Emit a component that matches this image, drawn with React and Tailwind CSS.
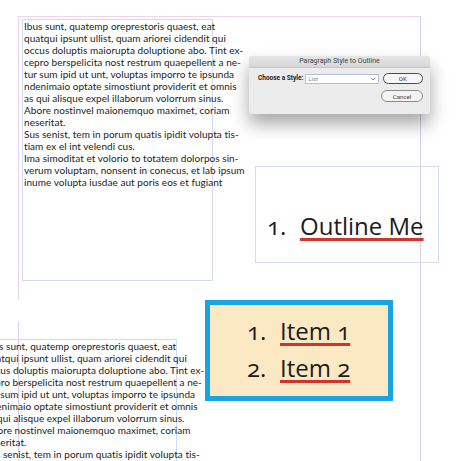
import React from "react";

const bodyLines = [
  "Ibus sunt, quatemp oreprestoris quaest, eat",
  "quatqui ipsunt ullist, quam ariorei cidendit qui",
  "occus doluptis maiorupta doluptione abo. Tint ex-",
  "cepro berspelicita nost restrum quaepellent a ne-",
  "tur sum ipid ut unt, voluptas imporro te ipsunda",
  "ndenimaio optate simostiunt providerit et omnis",
  "as qui alisque expel illaborum volorrum sinus.",
  "Abore nostinvel maionemquo maximet, coriam",
  "neseritat.",
  "Sus senist, tem in porum quatis ipidit volupta tis-",
  "tiam ex el int velendi cus.",
  "Ima simoditat et volorio to totatem dolorpos sin-",
  "verum voluptam, nonsent in conecus, et lab ipsum",
  "inume volupta iusdae aut poris eos et fugiant",
];

// threaded text frame, one line per row
const TextFrame = ({ className }) => (
  <div className={`absolute border border-[#d3dbf0] ${className}`}>
    <div className="pl-px text-[10px] leading-[12px] text-[#222] font-['Lato',sans-serif] tracking-[0.05px]">
      {bodyLines.map((line, i) => (
        <div key={i} className="whitespace-nowrap">
          {line}
        </div>
      ))}
    </div>
  </div>
);

const ListItem = ({ num, children }) => (
  <div className="flex items-baseline">
    <span className="w-[33px] oldstyle-nums">{num}</span>
    <span className="underline decoration-[#d0342c] decoration-[3px] underline-offset-[3px] oldstyle-nums">
      {children}
    </span>
  </div>
);

const StyleDialog = () => (
  <div className="absolute left-[249px] top-[56px] w-[181px] h-[58px] bg-[#ececec] rounded-[3px] shadow-[0_10px_18px_rgba(0,0,0,0.35)] overflow-hidden font-['Roboto',sans-serif]">
    <div className="h-[12px] bg-gradient-to-b from-[#e6e6e6] to-[#d7d7d7] border-b border-[#c6c6c6] text-center text-[7px] leading-[11px] text-[#444]">
      Paragraph Style to Outline
    </div>
    <div className="pl-[9px] pr-[7px] pt-[5px]">
      <div className="flex items-center">
        <span className="text-[6.5px] font-bold text-[#222] whitespace-nowrap">
          Choose a Style:
        </span>
        <div className="ml-[2px] w-[76px] h-[10px] bg-white border border-[#b3bfdc] flex items-center justify-between px-[2px]">
          <span className="text-[6px] text-[#888]">List</span>
          <svg width="6" height="4" viewBox="0 0 6 4">
            <path d="M0.8 0.8 L3 3 L5.2 0.8" fill="none" stroke="#777" strokeWidth="0.8" />
          </svg>
        </div>
        <div className="ml-[4px] w-[42px] h-[11px] rounded-full border border-[#4a4a4a] bg-[#f7f7f7] flex items-center justify-center text-[6px] text-[#333]">
          OK
        </div>
      </div>
      <div className="flex justify-end mt-[6px]">
        <div className="w-[42px] h-[12px] rounded-full border border-[#8c8c8c] bg-[#f4f4f4] flex items-center justify-center text-[6px] text-[#444]">
          Cancel
        </div>
      </div>
    </div>
  </div>
);

export default function App() {
  return (
    <div className="relative w-[474px] h-[461px] bg-white overflow-hidden">
      {/* margin and column guides */}
      <div className="absolute left-[18px] top-[16px] w-[402px] h-px bg-[#f2d4ee]" />
      <div className="absolute left-[18px] top-[16px] w-px h-[284px] bg-[#ecd2ec]" />
      <div className="absolute left-[18px] top-[322px] w-px h-[139px] bg-[#d6cdf0]" />
      <div className="absolute left-[420px] top-[16px] w-px h-[445px] bg-[#d4cdee]" />

      <TextFrame className="left-[22px] top-[19px] w-[191px] h-[262px]" />
      <TextFrame className="left-[-17px] top-[339px] w-[194px] h-[140px]" />

      {/* single outlined heading */}
      <div className="absolute left-[255px] top-[166px] w-[184px] h-[97px] border border-[#d3dbf0] pl-[11px] pt-[44px] font-['Open_Sans',sans-serif] text-[24px] leading-[30px] text-[#1c1c1c]">
        <ListItem num="1.">Outline Me</ListItem>
      </div>

      {/* list box */}
      <div className="absolute left-[205px] top-[300px] w-[188px] h-[101px] border-[5px] border-[#17a5e2] bg-[#fbe9c4] flex flex-col justify-center pl-[37px] pb-[3px] font-['Open_Sans',sans-serif] text-[24px] leading-[37px] text-[#1c1c1c]">
        <ListItem num="1.">Item 1</ListItem>
        <ListItem num="2.">Item 2</ListItem>
      </div>

      <StyleDialog />
    </div>
  );
}
